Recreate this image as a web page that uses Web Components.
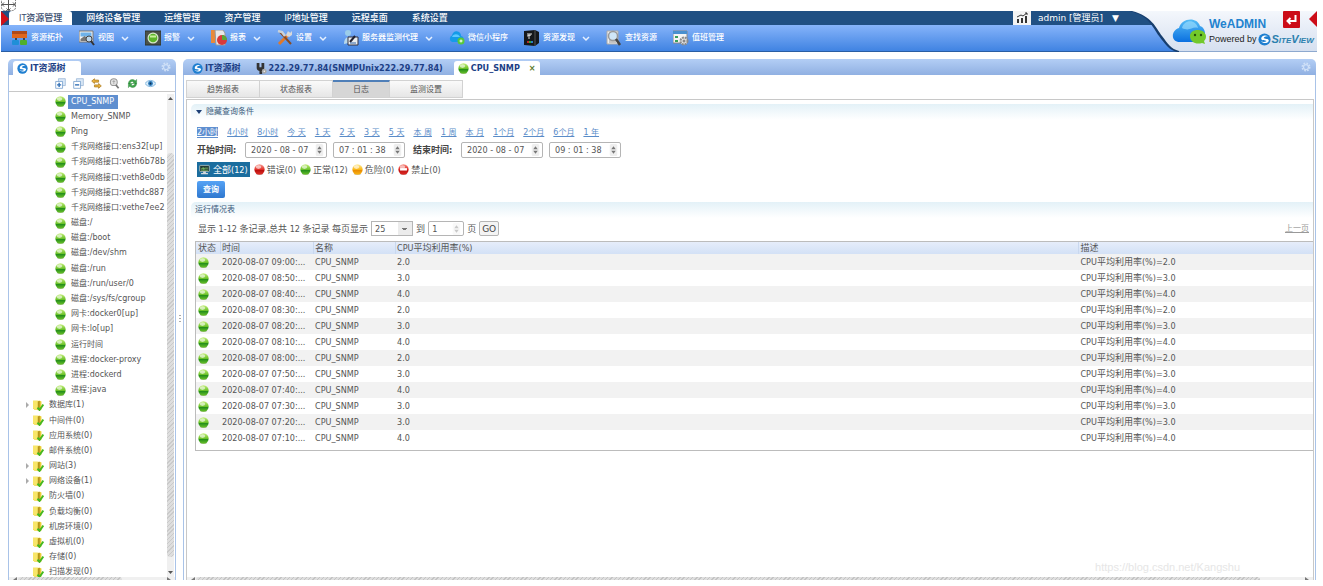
<!DOCTYPE html>
<html lang="zh-CN">
<head>
<meta charset="utf-8">
<title>WeADMIN</title>
<style>
  html, body {
    height: 100%;
    margin: 0;
  }
  body {
    box-sizing: border-box;
    display: flex;
    flex-direction: column;
    padding: 11px 6px 6px 1px;
    overflow: hidden;
    background: #fff;
    color: #555;
    font: 9px/12px "DejaVu Sans Condensed", "DejaVu Sans", "Noto Sans CJK SC", sans-serif;
    --small: 8px/12px "DejaVu Sans", "Noto Sans CJK SC", sans-serif;
    --navy: #205083;
    --line: #c8c8c8;
    --edge: #a9c3e8;
  }
</style>
</head>
<body>
<app-header></app-header>
<app-workspace></app-workspace>
<page-marks></page-marks>

<script>
const orb = (light, mid, dark, extra = "") => `
  <svg viewBox="0 0 16 16">
    <defs>
      <linearGradient id="g" x2="0" y2="1"><stop offset="0" stop-color="${light}"/><stop offset=".5" stop-color="${mid}"/><stop offset=".55" stop-color="${dark}"/><stop offset="1" stop-color="${mid}"/></linearGradient>
    </defs>
    <ellipse cx="8" cy="15" rx="5.500" ry="1" fill="#000" opacity=".2"/>
    <circle cx="8" cy="8" r="7.500" fill="url(#g)"/>
    <ellipse cx="6.500" cy="4.500" rx="4" ry="2.600" fill="#fff" opacity=".6"/>
    ${extra}
  </svg>`;

const ICONS = {
  green: orb("#c4ee7a", "#6cc22a", "#1f8a1a"),
  red: orb("#fa9a90", "#e03028", "#b80c0c"),
  yellow: orb("#ffeb9a", "#f9b616", "#e98a00"),
  stop: orb("#f88a80", "#dc2a24", "#c01414", '<rect x="3" y="6" width="10" height="3.500" fill="#fff"/>'),
  monitor: `<svg viewBox="0 0 16 16"><rect x="1" y="2" width="14" height="9" rx="1" fill="#223a33" stroke="#cfd9d2"/><path d="M3 7h2l1-2 1 3 1-2h5M3 9h10" stroke="#98e070" fill="none"/><path d="M6 11h4v2h3v2H3v-2h3z" fill="#d5dadd"/></svg>`,
  brand: `<svg viewBox="0 0 16 16"><circle cx="8" cy="8" r="7.500" fill="#1f7fd0"/><path d="M12.500 4C8.500 1.500 3.500 4 4 7.500c.4 2.200 5 1.200 6.500 2.400-1.600 1.600-4.500 1.500-6.800.4 2.500 3.200 8.800 2.700 9.600-.8C13.600 6.300 7.500 7.500 7 6c.6-1.700 3.600-1.900 5.500-2z" fill="#fff"/></svg>`,
  plug: `<svg viewBox="0 0 16 16"><path d="M1 0h4v6h3V0h4v7c0 3-1.500 4-3 4.500V16H5v-4.500C2 11 1 9 1 7z" fill="#333"/><circle cx="12" cy="12" r="3.500" fill="#aaa"/><circle cx="12" cy="12" r="1" fill="#fff"/></svg>`,
  gear: `<svg viewBox="0 0 16 16"><circle cx="8" cy="8" r="6" fill="none" stroke="#cfe0f7" stroke-width="2.500" stroke-dasharray="2.700 2"/><circle cx="8" cy="8" r="4" fill="none" stroke="#cfe0f7" stroke-width="2"/></svg>`,
  folder: `<svg viewBox="0 0 16 16"><path d="M0 1h10l2 1v12H2l-2-2z" fill="#f0d53a"/><path d="M0 1h7v12H2l-2-1z" fill="#f8e66a"/><path d="M7 2l3-1v13l-3 1z" fill="#b5941c"/><path d="M10 2h2v12h-2z" fill="#e9cb38"/><path d="M6.500 11l3 3.500 5.500-8" fill="none" stroke="#45b820" stroke-width="2.800"/></svg>`,
  expand: `<svg viewBox="0 0 16 16"><path d="M5 1h10v10H5z" fill="#dbe9f7" stroke="#8faed0"/><path d="M1 5h10v10H1z" fill="#fff" stroke="#5d8fc4"/><path d="M3 10h6M6 7v6" stroke="#2f6eb5" stroke-width="2"/></svg>`,
  collapse: `<svg viewBox="0 0 16 16"><path d="M5 1h10v10H5z" fill="#dbe9f7" stroke="#8faed0"/><path d="M1 5h10v10H1z" fill="#fff" stroke="#5d8fc4"/><path d="M3 10h6" stroke="#2f6eb5" stroke-width="2"/></svg>`,
  swap: `<svg viewBox="0 0 16 16"><path d="M5 1L1 4.500 5 8V6h6V3H5zM11 8l4 3.500-4 3.500v-2H5v-3h6z" fill="#e9b440" stroke="#a8751a"/></svg>`,
  search: `<svg viewBox="0 0 16 16"><circle cx="7" cy="6" r="5" fill="#e2e2e2" stroke="#999" stroke-width="1.500"/><path d="M7 3v6M5 5h4" stroke="#999"/><path d="M10 10l4 5" stroke="#777" stroke-width="2.500"/></svg>`,
  refresh: `<svg viewBox="0 0 16 16"><path d="M2 8c0-5 6-8 10-4l2-2v6H8l2-2C7 4 5 6 4.500 8zM14 8c0 5-6 8-10 4l-2 2V8h6l-2 2c3 2 5 0 5.500-2z" fill="#3fa34a" stroke="#1f7a2e" stroke-width=".5"/></svg>`,
  eye: `<svg viewBox="0 0 16 16"><path d="M0 8c4-6 12-6 16 0-4 6-12 6-16 0z" fill="#d6ebfa" stroke="#5c9fd2"/><circle cx="8" cy="8" r="3.500" fill="#2b79b9"/><circle cx="8" cy="8" r="1.300" fill="#0c2d4d"/></svg>`,
  topology: `<svg viewBox="0 0 16 16"><path d="M0 1h15v7H0z" fill="#e0661c"/><path d="M0 1h15v3H0z" fill="#b04a18"/><path d="M3 8h2v3H3zM11 8h2v3h-2z" fill="#444"/><rect y="10" width="7" height="5" rx="1" fill="#1f8fd8"/><rect x="8" y="10" width="7" height="5" rx="1" fill="#4faf2c"/></svg>`,
  view: `<svg viewBox="0 0 16 16"><path d="M0 1h14v11H0z" fill="#f3f3f3" stroke="#777"/><path d="M1.500 2.500h11v4h-11z" fill="#6fb2ea"/><path d="M1.500 9l4-3 3 2 4-2v5h-11z" fill="#777"/><circle cx="10" cy="9" r="3" fill="#bcd6ec" stroke="#444"/><path d="M12 11l3 4" stroke="#333" stroke-width="2"/></svg>`,
  alarm: `<svg viewBox="0 0 16 16"><path d="M0 1h16v14H0z" fill="#4b5249" stroke="#2d322d"/><circle cx="8" cy="8" r="5.500" fill="#d8e8cc"/><circle cx="8" cy="8" r="4.300" fill="#5db52a"/><path d="M5 5.500h6v2H5z" fill="#c9f09a"/></svg>`,
  report: `<svg viewBox="0 0 16 16"><path d="M0 0h4v13H0z" fill="#e98a3a"/><path d="M4 0h8l2 3v12H5z" fill="#e8e8e8" stroke="#999"/><circle cx="11" cy="10" r="5" fill="#d83a3a"/><path d="M11 10V5a5 5 0 0 1 5 5z" fill="#58a83a"/></svg>`,
  tools: `<svg viewBox="0 0 16 16"><path d="M2 14L12 4" stroke="#e0782a" stroke-width="3"/><path d="M10 6l3-3" stroke="#ddd" stroke-width="2"/><path d="M11 1l2 2 2-2v4l-3 2-3-2z" fill="#d8d8d8"/><path d="M14 14L3 2" stroke="#8a4b22" stroke-width="2"/><path d="M1 1l4 1 3 4" stroke="#c9d2da" stroke-width="2.500" fill="none"/></svg>`,
  agent: `<svg viewBox="0 0 16 16"><circle cx="5" cy="3" r="3" fill="#9ccde9"/><path d="M1 14c0-9 8-9 9-2z" fill="#b7d8ec"/><path d="M5 7h10v8H5z" fill="#e9edf0" stroke="#334"/><path d="M7 12l5-6" stroke="#223" stroke-width="2"/><path d="M7 13h6" stroke="#36a"/></svg>`,
  cloud: `<svg viewBox="0 0 16 16"><path d="M3 12a3.500 3.500 0 0 1 0-6.500A4.500 4.500 0 0 1 12 6c4 1 3 6 0 6z" fill="#159be8"/><path d="M3 7c1-3 6-4 8 0z" fill="#5cc8ff"/><circle cx="12" cy="11" r="3.500" fill="#57c93a"/><path d="M10.500 11h3M12 9.500v3" stroke="#fff"/></svg>`,
  server: `<svg viewBox="0 0 16 16"><path d="M0 1l11-1 4 2v11l-4 3-11-1z" fill="#15181b"/><path d="M11 0v16" stroke="#555"/><path d="M3 4h5M5 4v5M3 6l4-1" stroke="#ddd"/><path d="M3 12h2" stroke="#e33" stroke-width="1.500"/><path d="M5 12h2" stroke="#3d3" stroke-width="1.500"/><path d="M7 12h2" stroke="#39f" stroke-width="1.500"/></svg>`,
  find: `<svg viewBox="0 0 16 16"><path d="M1 1h11v13H1z" fill="#eee" stroke="#aaa"/><path d="M3 10h7M3 12h7" stroke="#999"/><circle cx="7" cy="6" r="4.500" fill="#cfe6f7" stroke="#999" stroke-width="1.500"/><path d="M10 9l4 6" stroke="#444" stroke-width="2.500"/></svg>`,
  duty: `<svg viewBox="0 0 16 16"><path d="M0 1h14v12H0z" fill="#f5f5f5" stroke="#888"/><path d="M0 1h14v3H0z" fill="#4a90cf"/><path d="M2 6h3v2H2zM2 10h3v2H2z" fill="#3aa05a"/><circle cx="11" cy="11" r="3.500" fill="#e6e6e6" stroke="#8a8a8a" stroke-width="2" stroke-dasharray="2 .8"/><circle cx="11" cy="11" r="1.500" fill="#888"/></svg>`,
  chart: `<svg viewBox="0 0 18 14"><path d="M0 0h18v14H0z" fill="#f4f4f4"/><path d="M4 12V8h2v4zM8 12V7h2v5zM12 12V5h2v7z" fill="#333"/><path d="M4 6l4-2 2 1 4-3M12 2h2v2" stroke="#333" fill="none"/></svg>`,
  chevron: `<svg viewBox="0 0 8 8"><path d="M1 3l3 3 3-3" fill="none" stroke="#e6f0ff" stroke-width="1.500"/></svg>`,
  spin: `<svg viewBox="0 0 10 16"><rect width="10" height="16" rx="2" fill="#eee"/><path d="M2 7l3-4 3 4zM2 9l3 4 3-4z" fill="#777"/></svg>`,
};

function define(name, html, setup) {
  const template = document.createElement("template");
  template.innerHTML = html;
  customElements.define(
    name,
    class extends HTMLElement {
      constructor() {
        super();
        this.attachShadow({ mode: "open" }).appendChild(template.content.cloneNode(true));
      }
      connectedCallback() {
        if (setup) setup(this, this.shadowRoot);
      }
    },
  );
}

define("ui-icon", `
  <style>
    :host { display: inline-block; flex: none; width: var(--size, 11px); height: var(--size, 11px); }
    span, svg { display: block; width: 100%; height: 100%; }
  </style>
  <span></span>
`, (host, root) => {
  root.querySelector("span").innerHTML = ICONS[host.getAttribute("name")];
});

define("menu-bar", `
  <style>
    :host { display: flex; height: 14px; padding-left: 8px; background: var(--navy); color: #fff; font-weight: 500; }
    nav { display: flex; flex: 1; gap: 4px; }
    a { padding: 0 10px; color: inherit; text-decoration: none; line-height: 15px; white-space: nowrap; }
    a.on { background: #fff; color: #35496b; border-radius: 3px 3px 0 0; }
    button { display: flex; gap: 7px; align-items: center; padding: 0 8px 0 0; border: 0; background: none; color: inherit; font: 9px/14px "DejaVu Sans", "Noto Sans CJK SC", sans-serif; }
    ui-icon { width: 18px; height: 14px; }
    i { padding-left: 2px; font-style: normal; }
  </style>
  <nav>
    <a class="on" href="#">IT资源管理</a><a href="#">网络设备管理</a><a href="#">运维管理</a>
    <a href="#">资产管理</a><a href="#">IP地址管理</a><a href="#">远程桌面</a><a href="#">系统设置</a>
  </nav>
  <button><ui-icon name="chart"></ui-icon><span>admin [管理员]</span><i>▼</i></button>
`);

define("tool-item", `
  <style>
    :host { display: block; }
    button { display: flex; align-items: center; gap: 3px; padding: 0; border: 0; background: none; color: #fff; font: var(--small); font-weight: 500; white-space: nowrap; }
    #icon { display: flex; }
    ui-icon { --size: 16px; }
    .more { --size: 8px; margin-left: 4px; }
    :host(:not([menu])) .more { display: none; }
  </style>
  <button><span id="icon"></span><slot></slot><ui-icon class="more" name="chevron"></ui-icon></button>
`, (host, root) => {
  root.querySelector("#icon").innerHTML = `<ui-icon name="${host.getAttribute("icon")}"></ui-icon>`;
});

define("tool-bar", `
  <style>
    :host { display: flex; align-items: center; gap: 16px; height: 26px; padding: 0 11px; background: linear-gradient(#86b4fa, #4083e2); border-bottom: 1px solid #2a5ea3; }
  </style>
  <tool-item icon="topology">资源拓扑</tool-item>
  <tool-item icon="view" menu>视图</tool-item>
  <tool-item icon="alarm" menu>报警</tool-item>
  <tool-item icon="report" menu>报表</tool-item>
  <tool-item icon="tools" menu>设置</tool-item>
  <tool-item icon="agent" menu>服务器监测代理</tool-item>
  <tool-item icon="cloud">微信小程序</tool-item>
  <tool-item icon="server" menu>资源发现</tool-item>
  <tool-item icon="find">查找资源</tool-item>
  <tool-item icon="duty">值班管理</tool-item>
`);

define("brand-logo", `
  <style>
    :host { display: grid; flex: none; width: 190px; height: 41px; overflow: hidden; }
    .bg, .row { grid-area: 1 / 1; }
    .row { display: flex; gap: 3px; padding: 6px 0 0 45px; }
    .cloud { flex: none; width: 34px; height: 30px; }
    .name { color: #2283cf; font: bold 12px/15px "Liberation Sans", sans-serif; }
    .by { display: flex; align-items: center; gap: 1px; color: #222; font: 9px/14px "Liberation Sans", sans-serif; white-space: nowrap; }
    .by ui-icon { --size: 13px; }
    b { font: italic bold 11px/14px "Liberation Sans", sans-serif; font-variant: small-caps; color: #2b7fae; }
  </style>
  <svg class="bg" width="190" height="41" viewBox="0 0 190 41">
    <defs>
      <linearGradient id="blue" x2="0" y2="1"><stop offset="0" stop-color="#86b4fa"/><stop offset="1" stop-color="#4083e2"/></linearGradient>
      <linearGradient id="pale" x2="0" y2="1"><stop offset="0" stop-color="#f4f7fc"/><stop offset="1" stop-color="#d6e0f0"/></linearGradient>
    </defs>
    <path d="M0 0h60v14H0z" fill="#205083"/>
    <path d="M0 14h60v26H0z" fill="url(#blue)"/>
    <path d="M0 40h190v1H0z" fill="#2a5ea3"/>
    <path d="M2 0c20 4 24 17 30 25s10 14 18 16h140V0z" fill="#173e6e"/>
    <path d="M5 0c20 5 24 17 30 25s9 13 17 15h138V0z" fill="url(#pale)"/>
    <path d="M52 40h138v1H52z" fill="#8ea9cf"/>
  </svg>
  <div class="row">
    <svg class="cloud" viewBox="0 0 34 30">
      <defs><linearGradient id="c" x2="0" y2="1"><stop offset="0" stop-color="#56bdf6"/><stop offset="1" stop-color="#0a6fe0"/></linearGradient></defs>
      <path d="M9 25C-1 26-2 14 7 11 9 1 25-1 28 9c7 2 7 15-2 16z" fill="url(#c)"/>
      <path d="M10 11c2-9 14-9 16 0-6-2-8 4-16 0z" fill="#a5e2ff" opacity=".6"/>
      <path d="M18 19c0-8 15-8 16 0 0 3-1 4-2 5l1 3-3-1c-6 2-12-1-12-7z" fill="#72c92b"/>
      <circle cx="23" cy="18" r="1.200" fill="#24500a"/><circle cx="29" cy="18" r="1.200" fill="#24500a"/>
    </svg>
    <div>
      <div class="name">WeADMIN</div>
      <div class="by">Powered by <ui-icon name="brand"></ui-icon><b>SiteView</b></div>
    </div>
  </div>
`);

define("app-header", `
  <style>
    :host { display: flex; flex: none; }
    div { flex: 1; min-width: 0; }
  </style>
  <div><menu-bar></menu-bar><tool-bar></tool-bar></div>
  <brand-logo></brand-logo>
`);

define("panel-box", `
  <style>
    :host { display: flex; flex-direction: column; min-width: 0; box-sizing: border-box; }
    header { display: flex; align-items: flex-end; gap: 7px; height: 16px; padding: 0 5px; background: linear-gradient(#b3cef5, #90b0e2); border-radius: 5px 5px 0 0; }
    ui-icon { --size: 10px; align-self: center; margin-left: auto; }
    .body { display: flex; flex: 1; flex-direction: column; min-height: 0; border: solid var(--edge); border-width: 0 1px; }
  </style>
  <header><slot name="tab"></slot><ui-icon name="gear"></ui-icon></header>
  <div class="body"><slot></slot></div>
`);

define("panel-tab", `
  <style>
    :host { display: block; }
    button { display: flex; align-items: center; gap: 2px; height: 14px; padding: 0 4px; border: 0; border-radius: 3px 3px 0 0; background: none; color: #1d3f86; font: inherit; font-weight: bold; white-space: nowrap; }
    #icon { display: flex; }
    :host([on]) button { background: #fff; }
    :host([wide]) button { padding-right: 15px; }
    i { display: none; padding-left: 7px; color: #5b7a2a; font-style: normal; }
    :host([closable]) i { display: inline; }
  </style>
  <button><span id="icon"></span><slot></slot><i>×</i></button>
`, (host, root) => {
  root.querySelector("#icon").innerHTML = `<ui-icon name="${host.getAttribute("icon")}"></ui-icon>`;
});

define("scroll-strip", `
  <style>
    :host { display: flex; align-items: center; gap: 1px; height: 3px; padding: 0 4px; background: #f0f0f0; }
    span { flex: 1; display: flex; height: 3px; }
    span::before { content: ""; width: var(--thumb, 70%); background: repeating-linear-gradient(135deg, #c4c4c4 0 1px, #dedede 1px 3px); border-radius: 3px 3px 0 0; }
    svg { width: 4px; height: 3px; }
  </style>
  <svg viewBox="0 0 4 3"><path d="M4 0v3H0z" fill="#777"/></svg><span></span><svg viewBox="0 0 4 3"><path d="M0 0v3h4z" fill="#777"/></svg>
`);

const TREE = [
  "CPU_SNMP", "Memory_SNMP", "Ping", "千兆网络接口:ens32[up]", "千兆网络接口:veth6b78b",
  "千兆网络接口:veth8e0db", "千兆网络接口:vethdc887", "千兆网络接口:vethe7ee2", "磁盘:/", "磁盘:/boot",
  "磁盘:/dev/shm", "磁盘:/run", "磁盘:/run/user/0", "磁盘:/sys/fs/cgroup", "网卡:docker0[up]", "网卡:lo[up]",
  "运行时间", "进程:docker-proxy", "进程:dockerd", "进程:java",
];
const GROUPS = [
  "+数据库(1)", "中间件(0)", "应用系统(0)", "邮件系统(0)", "+网站(3)", "+网络设备(1)",
  "防火墙(0)", "负载均衡(0)", "机房环境(0)", "虚拟机(0)", "存储(0)", "扫描发现(0)",
];

define("tree-view", `
  <style>
    :host { display: flex; flex: 1; flex-direction: column; min-height: 0; }
    .tools { display: flex; justify-content: center; gap: 7px; height: 15px; align-items: center; padding: 1px 0 0 26px; border-bottom: 1px solid var(--line); }
    .tools button { display: block; padding: 0; border: 0; background: none; }
    .tools ui-icon { display: block; }
    .area { display: flex; flex: 1; min-height: 0; padding: 2px 1px 0 0; }
    ul { display: flex; flex: 1; flex-direction: column; min-width: 0; margin: 0 0 -3px; padding: 0; list-style: none; overflow: hidden; font: var(--small); }
    li { display: flex; flex: 1; align-items: center; min-height: 0; padding-left: 16px; white-space: nowrap; }
    li.leaf { padding-left: 46px; }
    .arrow { width: 8px; height: 6px; }
    li a { margin-left: 2px; padding-left: 3px; color: inherit; text-decoration: none; }
    li.on a { padding: 1px 4px 1px 3px; background: #5f8fd0; color: #fff; }
    .bar { display: flex; flex: none; flex-direction: column; width: 7px; background: #f0f0f0; }
    .bar svg { flex: none; width: 7px; height: 9px; }
    .bar i { flex: 404; border-radius: 4px; background: repeating-linear-gradient(135deg, #cacaca 0 1px, #dedede 1px 3px); }
    .bar::before { content: ""; order: 1; flex: 50; }
    .bar svg:first-child { order: 0; }
    .bar i { order: 2; }
    .bar::after { content: ""; order: 3; flex: 11; }
    .bar svg:last-child { order: 4; }
    scroll-strip { position: relative; --thumb: 70%; }
  </style>
  <div class="tools"></div>
  <div class="area">
    <ul></ul>
    <div class="bar">
      <svg viewBox="0 0 7 9"><path d="M1 6l2.500-3L6 6z" fill="#555"/></svg><i></i>
      <svg viewBox="0 0 7 9"><path d="M1 3l2.500 3L6 3z" fill="#555"/></svg>
    </div>
  </div>
  <scroll-strip></scroll-strip>
`, (host, root) => {
  root.querySelector(".tools").innerHTML = ["expand", "collapse", "swap", "search", "refresh", "eye"]
    .map((name) => `<button aria-label="${name}"><ui-icon name="${name}"></ui-icon></button>`).join("");
  const leaves = TREE.map((text, i) => `<li class="leaf${i ? "" : " on"}"><ui-icon name="green"></ui-icon><a href="#">${text}</a></li>`);
  const groups = GROUPS.map((text) => `
    <li><svg class="arrow" viewBox="0 0 8 6">${text[0] === "+" ? '<path d="M1 0l3 3-3 3z" fill="#aaa"/>' : ""}</svg>
    <ui-icon name="folder"></ui-icon><a href="#">${text.replace("+", "")}</a></li>`);
  root.querySelector("ul").innerHTML = leaves.concat(groups).join("");
});

define("section-title", `
  <style>
    :host { display: flex; flex: none; align-items: center; height: 16px; margin-left: 4px; padding-left: 4px; border-radius: 5px 0 0 0; background: linear-gradient(#e3f1f7, #fff); color: #3b5a7c; font: var(--small); }
    svg { width: 6px; height: 4px; margin: 0 4px 0 1px; }
    :host(:not([open])) svg { display: none; }
  </style>
  <svg viewBox="0 0 6 4"><path d="M0 0h6L3 4z" fill="#1d3f76"/></svg><slot></slot>
`);

define("spin-field", `
  <style>
    :host { display: flex; box-sizing: border-box; align-items: center; height: 16px; padding: 0 2px 0 5px; border: 1px solid #b5b5b5; border-radius: 2px; background: #fff; }
    input { flex: 1; min-width: 0; width: 100%; padding: 0; border: 0; outline: 0; background: none; color: #555; font: inherit; }
    ui-icon { width: 9px; height: 12px; }
    :host([dim]) { padding-left: 3px; }
    :host([dim]) ui-icon { opacity: .4; }
  </style>
  <input type="text"><ui-icon name="spin"></ui-icon>
`, (host, root) => {
  const input = root.querySelector("input");
  input.value = host.getAttribute("value");
  input.setAttribute("aria-label", host.getAttribute("label"));
});

define("query-form", `
  <style>
    :host { display: flex; flex: none; flex-direction: column; gap: 4px; padding: 7px 0 4px 10px; }
    div { display: flex; align-items: center; white-space: nowrap; }
    .ranges { gap: 9px; height: 11px; font: var(--small); line-height: 11px; }
    a { color: #5a8cc8; }
    a.on { background: #5f8fd0; color: #fff; }
    .times { gap: 6px; height: 16px; }
    b { width: 42px; color: #444; }
    b + spin-field { width: 82px; }
    spin-field { width: 72px; }
    spin-field + b { margin-left: 2px; }
    .states { gap: 4px; height: 15px; }
    .states button { display: flex; align-items: center; gap: 2px; height: 15px; padding: 0; border: 0; background: none; color: inherit; font: inherit; }
    .states button.on { gap: 3px; padding: 0 2px; background: #1b6d9e; color: #fff; }
    .go { width: 28px; height: 17px; padding: 0; border: 0; border-radius: 2px; background: linear-gradient(#55a2f5, #2f78cf); color: #fff; font: var(--small); font-weight: bold; }
  </style>
  <div class="ranges">
    <a class="on" href="#">2小时</a><a href="#">4小时</a><a href="#">8小时</a><a href="#">今 天</a><a href="#">1 天</a><a href="#">2 天</a><a href="#">3 天</a><a href="#">5 天</a><a href="#">本 周</a><a href="#">1 周</a><a href="#">本 月</a><a href="#">1个月</a><a href="#">2个月</a><a href="#">6个月</a><a href="#">1 年</a>
  </div>
  <div class="times">
    <b>开始时间:</b><spin-field label="开始日期" value="2020 - 08 - 07"></spin-field><spin-field label="开始时间" value="07 : 01 : 38"></spin-field>
    <b>结束时间:</b><spin-field label="结束日期" value="2020 - 08 - 07"></spin-field><spin-field label="结束时间" value="09 : 01 : 38"></spin-field>
  </div>
  <div class="states">
    <button class="on"><ui-icon name="monitor"></ui-icon>全部(12)</button>
    <button><ui-icon name="red"></ui-icon>错误(0)</button>
    <button><ui-icon name="green"></ui-icon>正常(12)</button>
    <button><ui-icon name="yellow"></ui-icon>危险(0)</button>
    <button><ui-icon name="stop"></ui-icon>禁止(0)</button>
  </div>
  <button class="go">查询</button>
`);

define("page-bar", `
  <style>
    :host { display: flex; flex: none; align-items: center; gap: 3px; height: 15px; margin: 3px 4px 5px 11px; white-space: nowrap; }
    select { width: 42px; height: 15px; padding: 0 3px; appearance: none; border: 1px solid #b5b5b5; border-radius: 0; color: #555; font: inherit;
      background: linear-gradient(#777, #777) no-repeat right 5px center / 5px 1px, linear-gradient(#777, #777) no-repeat right 6px top 7px / 3px 1px, linear-gradient(90deg, #fff 26px, #ececec 26px); }
    spin-field { width: 36px; height: 15px; }
    button { height: 15px; padding: 0 2px; border: 1px solid #b5b5b5; border-radius: 2px; background: #f4f4f4; color: #444; font: 9px/12px "DejaVu Sans", sans-serif; }
    a { margin-left: auto; color: #999; font: var(--small); }
  </style>
  <label for="size">显示 1-12 条记录,总共 12 条记录 每页显示</label>
  <select id="size"><option>25</option></select>
  <span>到</span><spin-field dim label="页" value="1"></spin-field><span>页</span><button>GO</button>
  <a href="#">上一页</a>
`);

const ROWS = [
  ["09:00", "2.0"], ["08:50", "3.0"], ["08:40", "4.0"], ["08:30", "2.0"], ["08:20", "3.0"], ["08:10", "4.0"],
  ["08:00", "2.0"], ["07:50", "3.0"], ["07:40", "4.0"], ["07:30", "3.0"], ["07:20", "3.0"], ["07:10", "4.0"],
];

define("log-table", `
  <style>
    :host { display: block; flex: none; margin-left: 8px; padding-bottom: 4px; border: 1px solid #bcbcbc; border-right: 0; }
    table { width: 100%; table-layout: fixed; border-collapse: collapse; }
    th, td { padding: 0 2px; text-align: left; white-space: nowrap; }
    th { height: 12px; background: linear-gradient(#e6edfa, #d3e1f6); box-shadow: inset 1px 0 #c9d8ef; font-weight: normal; line-height: 12px; }
    th:first-child { box-shadow: none; }
    td { height: 16px; line-height: 16px; }
    tbody tr:nth-child(odd) { background: #f2f2f2; }
    ui-icon { display: block; }
  </style>
  <table>
    <colgroup><col style="width: 24px"><col style="width: 93px"><col style="width: 82px"><col><col style="width: 21%"></colgroup>
    <thead><tr><th>状态</th><th>时间</th><th>名称</th><th>CPU平均利用率(%)</th><th>描述</th></tr></thead>
    <tbody></tbody>
  </table>
`, (host, root) => {
  root.querySelector("tbody").innerHTML = ROWS.map(([time, cpu]) => `
    <tr><td><ui-icon name="green"></ui-icon></td><td>2020-08-07 ${time}:...</td><td>CPU_SNMP</td><td>${cpu}</td><td>CPU平均利用率(%)=${cpu}</td></tr>`).join("");
});

define("log-page", `
  <style>
    :host { display: flex; flex: 1; flex-direction: column; min-height: 0; padding: 5px 1px 0 2px; }
    nav { display: flex; flex: none; height: 19px; }
    nav button { height: 18px; padding: 1px 20px 0; border: 1px solid #d2d2d2; border-left-width: 0; background: linear-gradient(#fafafa, #e6e6e6); color: #555; font: var(--small); }
    nav button:first-child { border-left-width: 1px; }
    nav button.on { border-top: 2px solid #4f7fb8; background: #d6d6d6; padding-top: 0; }
    .box { display: flex; flex: 1; flex-direction: column; min-height: 0; padding-top: 4px; border: 1px solid var(--line); border-bottom: 0; }
    .mark { margin: auto 73px 3px auto; color: #e6e6e6; font: 11px/14px "Liberation Sans", sans-serif; }
    scroll-strip { --thumb: 96%; flex: none; }
  </style>
  <nav><button>趋势报表</button><button>状态报表</button><button class="on">日志</button><button>监测设置</button></nav>
  <div class="box">
    <section-title open>隐藏查询条件</section-title>
    <query-form></query-form>
    <section-title>运行情况表</section-title>
    <page-bar></page-bar>
    <log-table></log-table>
    <div class="mark">https://blog.csdn.net/Kangshu</div>
    <scroll-strip></scroll-strip>
  </div>
`);

define("app-workspace", `
  <style>
    :host { display: flex; flex: 1; min-height: 0; padding: 7px 1px 0 7px; }
    .side { flex: none; width: 168px; }
    .main { flex: 1; }
    .split { display: flex; align-items: center; justify-content: center; width: 7px; }
  </style>
  <panel-box class="side">
    <panel-tab slot="tab" on wide icon="brand">IT资源树</panel-tab>
    <tree-view></tree-view>
  </panel-box>
  <div class="split"><svg width="2" height="9" viewBox="0 0 2 9"><path d="M0 0h2v1H0zM0 3h2v1H0zM0 6h2v1H0z" fill="#aaa"/></svg></div>
  <panel-box class="main">
    <panel-tab slot="tab" icon="brand">IT资源树</panel-tab>
    <panel-tab slot="tab" icon="plug">222.29.77.84(SNMPUnix222.29.77.84)</panel-tab>
    <panel-tab slot="tab" on closable icon="green">CPU_SNMP</panel-tab>
    <log-page></log-page>
  </panel-box>
`);

// Markers that float over the page corners
define("page-marks", `
  <style>
    svg { position: absolute; top: 0; }
    .left { left: 0; }
    .right { right: 6px; }
  </style>
  <svg class="left" width="18" height="28" viewBox="0 0 18 28">
    <path d="M1 11l8 8-8 7z" fill="#d01018"/>
    <rect x="1.500" y="-3.500" width="14" height="14" rx="3" fill="none" stroke="#777" stroke-dasharray="2 1"/>
    <path d="M2 4.500h13M8.500 0v10M4 2.500l-2 2 2 2M13 2.500l2 2-2 2M6.500 8.500l2 2 2-2" fill="none" stroke="#555"/>
  </svg>
  <svg class="right" width="34" height="28" viewBox="0 0 34 28">
    <rect y="11" width="17" height="17" rx="1" fill="#cc0c18"/>
    <path d="M12.500 15v6H5M7.500 18l-3 3 3 3" fill="none" stroke="#fff" stroke-width="2"/>
    <path d="M34 11l-8 8 8 8z" fill="#cc0c18"/>
  </svg>
`);
</script>
</body>
</html>
